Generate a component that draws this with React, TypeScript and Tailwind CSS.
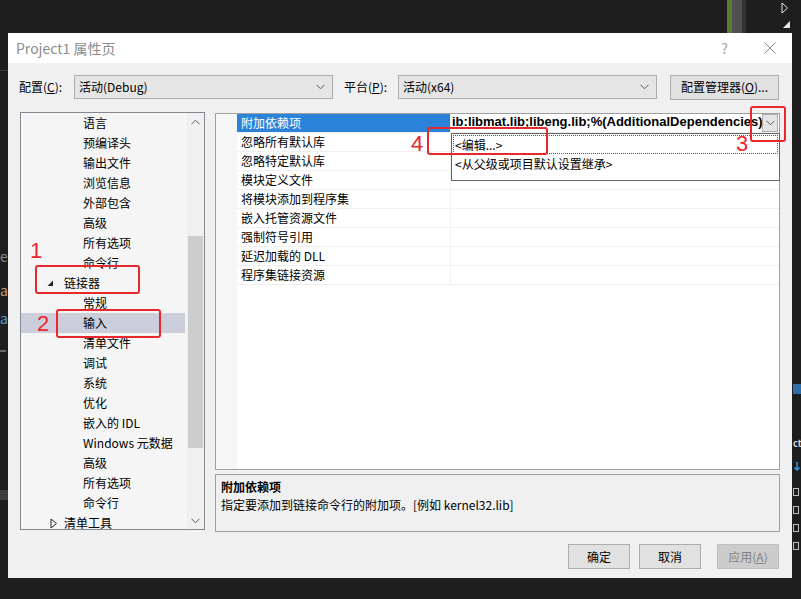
import React from "react";

// Visual Studio "属性页" dialog with red step annotations

const ui = "font-['Noto_Sans_CJK_SC',sans-serif]";

interface TreeItem {
  label: string;
  level: 1 | 2;
  expanded?: boolean;
  selected?: boolean;
}

const treeItems: TreeItem[] = [
  { label: "语言", level: 2 },
  { label: "预编译头", level: 2 },
  { label: "输出文件", level: 2 },
  { label: "浏览信息", level: 2 },
  { label: "外部包含", level: 2 },
  { label: "高级", level: 2 },
  { label: "所有选项", level: 2 },
  { label: "命令行", level: 2 },
  { label: "链接器", level: 1, expanded: true },
  { label: "常规", level: 2 },
  { label: "输入", level: 2, selected: true },
  { label: "清单文件", level: 2 },
  { label: "调试", level: 2 },
  { label: "系统", level: 2 },
  { label: "优化", level: 2 },
  { label: "嵌入的 IDL", level: 2 },
  { label: "Windows 元数据", level: 2 },
  { label: "高级", level: 2 },
  { label: "所有选项", level: 2 },
  { label: "命令行", level: 2 },
  { label: "清单工具", level: 1, expanded: false },
];

const properties = [
  "附加依赖项",
  "忽略所有默认库",
  "忽略特定默认库",
  "模块定义文件",
  "将模块添加到程序集",
  "嵌入托管资源文件",
  "强制符号引用",
  "延迟加载的 DLL",
  "程序集链接资源",
];

const Chevron = ({ className = "" }: { className?: string }) => (
  <svg width="9" height="6" viewBox="0 0 9 6" className={className}>
    <path d="M0.5 0.8 L4.5 4.8 L8.5 0.8" fill="none" stroke="#5a5a5a" strokeWidth="1" />
  </svg>
);

const Combo = ({ value }: { value: string }) => (
  <div className="w-[259px] h-[24px] bg-[#e5e5e5] border border-[#adadad] flex items-center pl-[4px] pr-[7px]">
    <span className="flex-1 text-[12px] text-black">{value}</span>
    <Chevron />
  </div>
);

const Button = ({
  children,
  width,
  disabled,
}: {
  children: React.ReactNode;
  width: string;
  disabled?: boolean;
}) => (
  <div
    className={`${width} h-[25px] flex items-center justify-center text-[12px] border ${
      disabled
        ? "bg-[#cccccc] border-[#bfbfbf] text-[#838383]"
        : "bg-[#e1e1e1] border-[#adadad] text-black"
    }`}
  >
    {children}
  </div>
);

const Mark = ({ n, box, label }: { n: string; box: string; label: string }) => (
  <>
    <div className={`absolute border-[2.5px] border-[#e8282b] rounded-[3px] ${box}`} />
    <div
      className={`absolute font-['Liberation_Sans',sans-serif] text-[22px] leading-[22px] text-[#e8282b] ${label}`}
    >
      {n}
    </div>
  </>
);

export default function App() {
  return (
    <div className={`relative w-[801px] h-[599px] bg-[#1e1e1e] overflow-hidden pt-[33px] pl-[8px] ${ui}`}>
      {/* editor bits behind the dialog */}
      <div className="absolute left-[727px] top-0 w-[5px] h-[33px] bg-[#5b7b33]" />
      <div className="absolute left-[732px] top-0 w-[10px] h-[33px] bg-[#505050]" />
      <div className="absolute left-[742px] top-0 w-[4px] h-[33px] bg-[#333333]" />
      <svg className="absolute left-[781px] top-[2px]" width="8" height="12" viewBox="0 0 8 12">
        <path d="M1 1 L6.5 6 L1 11 Z" fill="none" stroke="#e6e6e6" strokeWidth="1" />
      </svg>
      <svg className="absolute left-[783px] top-[21px]" width="7" height="7" viewBox="0 0 7 7">
        <path d="M7 0 L7 7 L0 7 Z" fill="#e6e6e6" />
      </svg>
      <div className="absolute left-0 top-[70px] w-[8px] h-[1px] bg-[#3a3a3a]" />
      <div className="absolute left-0 top-[248px] text-[14px] leading-[16px] text-[#8a8a8a]">e</div>
      <div className="absolute left-0 top-[282px] text-[14px] leading-[16px] text-[#c8a070]">a</div>
      <div className="absolute left-0 top-[310px] text-[14px] leading-[16px] text-[#569cd6]">a</div>
      <div className="absolute left-0 top-[350px] w-[6px] h-[2px] bg-[#6a6a6a]" />
      <div className="absolute left-0 top-[490px] w-[8px] h-[10px] bg-[#3c3c3c]" />
      <div className="absolute left-[793px] top-[384px] w-[8px] h-[10px] bg-[#2f6fa8]" />
      <div className="absolute left-[793px] top-[437px] text-[9px] font-bold text-[#dcdcdc]">ct</div>
      <svg className="absolute left-[794px] top-[462px]" width="6" height="9" viewBox="0 0 6 9">
        <path d="M3 0 L3 8 M0.5 5.5 L3 8 L5.5 5.5" fill="none" stroke="#3a96dd" strokeWidth="1.5" />
      </svg>
      <div className="absolute left-[793px] top-[488px] flex flex-col gap-[10px]">
        <div className="w-[6px] h-[8px] border border-[#bdbdbd]" />
        <div className="w-[6px] h-[8px] border border-[#bdbdbd]" />
        <div className="w-[6px] h-[8px] border border-[#bdbdbd]" />
        <div className="w-[6px] h-[8px] border border-[#bdbdbd]" />
      </div>

      {/* dialog */}
      <div className="w-[784px] h-[545px] bg-[#f0f0f0] flex flex-col">
        <div className="h-[30px] bg-white flex items-center pl-[8px] pr-[16px]">
          <span className="flex-1 text-[14px] text-[#8c8c8c]">Project1 属性页</span>
          <span className="text-[14px] text-[#a0a0a0] mr-[36px]">?</span>
          <svg width="12" height="12" viewBox="0 0 12 12">
            <path d="M0.5 0.5 L11.5 11.5 M11.5 0.5 L0.5 11.5" stroke="#8a8a8a" strokeWidth="1" />
          </svg>
        </div>

        {/* configuration row */}
        <div className="mt-[12px] h-[24px] flex items-center pl-[11px] text-[12px] text-black">
          <span className="w-[55px]">
            配置(<span className="underline">C</span>):
          </span>
          <Combo value="活动(Debug)" />
          <span className="ml-[11px] w-[54px]">
            平台(<span className="underline">P</span>):
          </span>
          <Combo value="活动(x64)" />
          <div className="ml-[13px]">
            <Button width="w-[109px]">
              配置管理器(<span className="underline">O</span>)...
            </Button>
          </div>
        </div>

        {/* main area */}
        <div className="mt-[13px] flex pl-[12px]">
          {/* tree */}
          <div className="w-[185px] h-[418px] border border-[#828790] bg-[#f5f5f5] flex overflow-hidden">
            <div className="flex-1 flex flex-col">
              {treeItems.map((item, i) => (
                <div
                  key={i}
                  className={`h-[20px] shrink-0 flex items-center text-[12px] text-black mr-[2px] ${
                    item.selected ? "bg-[#cccedb]" : ""
                  } ${item.level === 2 ? "pl-[62px]" : "pl-[26px]"}`}
                >
                  {item.level === 1 && (
                    <span className="w-[17px] flex items-center">
                      {item.expanded ? (
                        <svg width="7" height="7" viewBox="0 0 7 7">
                          <path d="M6 0.5 L6 6 L0.5 6 Z" fill="#262626" />
                        </svg>
                      ) : (
                        <svg width="8" height="11" viewBox="0 0 8 11" className="ml-[3px]">
                          <path d="M1 1 L6.5 5.5 L1 10 Z" fill="none" stroke="#262626" strokeWidth="1" />
                        </svg>
                      )}
                    </span>
                  )}
                  {item.label}
                </div>
              ))}
            </div>
            <div className="w-[17px] shrink-0 bg-[#f0f0f0] flex flex-col items-center">
              <div className="h-[17px] flex items-center justify-center">
                <Chevron className="rotate-180" />
              </div>
              <div className="mt-[106px] h-[212px] w-[15px] bg-[#cdcdcd]" />
              <div className="mt-auto h-[17px] flex items-center justify-center">
                <Chevron />
              </div>
            </div>
          </div>

          {/* right side */}
          <div className="ml-[10px] w-[565px] flex flex-col">
            <div className="relative mt-[1px] h-[357px] border border-[#a0a0a0] bg-white flex">
              <div className="w-[21px] shrink-0 bg-[#f5f6f8]" />
              <div className="flex-1 min-w-0 flex flex-col">
                {properties.map((name, i) => (
                  <div key={i} className="h-[19px] flex border-b border-[#f0f0f0]">
                    <div
                      className={`w-[214px] shrink-0 flex items-center pl-[4px] text-[12px] border-r border-[#f0f0f0] ${
                        i === 0 ? "bg-[#2b83d9] text-white" : "text-black"
                      }`}
                    >
                      {name}
                    </div>
                    <div className="flex-1 min-w-0 relative flex items-center overflow-hidden">
                      {i === 0 && (
                        <>
                          <span className="pl-[1px] -mt-[2px] whitespace-nowrap font-['Liberation_Sans',sans-serif] text-[13px] font-bold text-black">
                            ib:libmat.lib;libeng.lib;%(AdditionalDependencies)
                          </span>
                          <div className="absolute right-[1px] top-0 w-[16px] h-[18px] bg-[#e5e5e5] border border-[#adadad] flex items-center justify-center">
                            <Chevron />
                          </div>
                        </>
                      )}
                    </div>
                  </div>
                ))}
              </div>

              {/* dropdown list */}
              <div className="absolute left-[235px] top-[19px] w-[329px] h-[48px] bg-white border border-[#646464] p-[1px] flex flex-col text-[12px] text-black">
                <div className="h-[19px] border border-dotted border-[#555] flex items-center pl-[1px]">
                  &lt;编辑...&gt;
                </div>
                <div className="h-[19px] flex items-center pl-[2px]">&lt;从父级或项目默认设置继承&gt;</div>
              </div>
            </div>

            <div className="mt-[4px] h-[58px] border border-[#a0a0a0] bg-[#f0f0f0] pl-[5px] pt-[3px] text-[12px] text-black">
              <div className="font-bold leading-[18px]">附加依赖项</div>
              <div className="leading-[18px]">指定要添加到链接命令行的附加项。[例如 kernel32.lib]</div>
            </div>
          </div>
        </div>

        {/* footer buttons */}
        <div className="mt-[12px] flex justify-end pr-[13px]">
          <Button width="w-[62px]">确定</Button>
          <div className="ml-[9px]">
            <Button width="w-[62px]">取消</Button>
          </div>
          <div className="ml-[16px]">
            <Button width="w-[62px]" disabled>
              应用(<span className="underline">A</span>)
            </Button>
          </div>
        </div>
      </div>

      {/* red step annotations */}
      <Mark n="1" box="left-[35px] top-[265px] w-[105px] h-[29px]" label="left-[30px] top-[240px]" />
      <Mark n="2" box="left-[56px] top-[309px] w-[105px] h-[29px]" label="left-[37px] top-[313px]" />
      <Mark n="3" box="left-[750px] top-[106px] w-[36px] h-[36px]" label="left-[736px] top-[133px]" />
      <Mark n="4" box="left-[427px] top-[127px] w-[121px] h-[28px]" label="left-[411px] top-[133px]" />
    </div>
  );
}
